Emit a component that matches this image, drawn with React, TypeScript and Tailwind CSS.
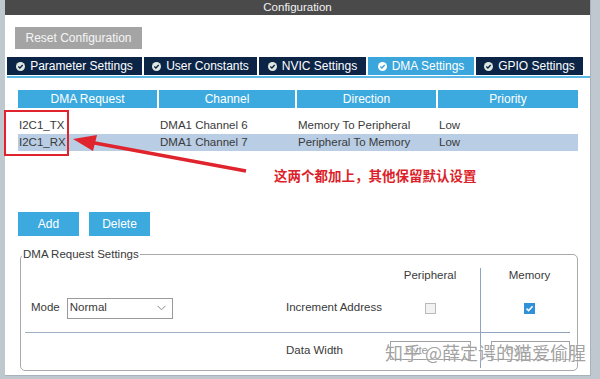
import React from "react";

const Check = ({ active }: { active?: boolean }) => (
  <svg width="9" height="9" viewBox="0 0 9 9" className="shrink-0">
    <circle cx="4.5" cy="4.5" r="4.5" fill={active ? "#ffffff" : "#dfe7e1"} />
    <path d="M2.3 4.6 L3.9 6.1 L6.7 3.1" fill="none" stroke={active ? "#3aa6db" : "#0c2547"} strokeWidth="1.4" />
  </svg>
);

const tabs = [
  { label: "Parameter Settings", w: "w-[135px]" },
  { label: "User Constants", w: "w-[113px]" },
  { label: "NVIC Settings", w: "w-[107px]" },
  { label: "DMA Settings", w: "w-[106px]", active: true },
  { label: "GPIO Settings", w: "w-[107px]" },
];

const rows = [
  ["I2C1_TX", "DMA1 Channel 6", "Memory To Peripheral", "Low"],
  ["I2C1_RX", "DMA1 Channel 7", "Peripheral To Memory", "Low"],
];

export default function App() {
  return (
    <div className="relative w-[600px] h-[379px] bg-[#bfc7cf] flex flex-col pl-[5px] pr-[9px] pb-[3px] font-['Liberation_Sans',Arial,sans-serif] text-[11.5px] text-[#3a3a3a] overflow-hidden">
      <div className="flex-1 min-h-0 bg-white flex flex-col border-r border-b border-[#a9b2bb] overflow-hidden">
        <div className="shrink-0 h-[15px] bg-[#4a4a4a] text-[#f2f2f2] leading-[15px] text-center">Configuration</div>

        <div className="shrink-0 mt-[12px] ml-[10px] w-[127px] h-[22px] bg-[#a4a4a4] text-[#f5f5f5] text-[12px] flex items-center justify-center">
          Reset Configuration
        </div>

        <div className="shrink-0 mt-[8px] ml-[2px] flex gap-[2px] h-[18px] text-[12px]">
          {tabs.map((t) => (
            <div
              key={t.label}
              className={`${t.w} h-full flex items-center justify-center gap-[5px] text-white ${t.active ? "bg-[#3aa6db]" : "bg-[#0c2547]"}`}
            >
              <Check active={t.active} />
              <span>{t.label}</span>
            </div>
          ))}
        </div>
        <div className="shrink-0 ml-[2px] mt-[1px] h-[2px] w-[583px] bg-[#5bb8e6]" />

        <div className="shrink-0 mt-[12px] ml-[13px] w-[560px]">
          <div className="grid grid-cols-[139px_136px_139px_140px] gap-x-[2px] h-[16px] text-[12px]">
            {["DMA Request", "Channel", "Direction", "Priority"].map((h) => (
              <div key={h} className="bg-[#3caade] text-white flex items-center justify-center">{h}</div>
            ))}
          </div>
          <div className="mt-[11px]">
            {rows.map((r, i) => (
              <div
                key={i}
                className={`grid grid-cols-[139px_136px_139px_140px] gap-x-[2px] h-[17px] items-center ${i === 1 ? "bg-[#b9cde4]" : ""}`}
              >
                {r.map((c, j) => (
                  <div key={j} className="pl-[1px] whitespace-nowrap">{c}</div>
                ))}
              </div>
            ))}
          </div>
        </div>

        <div className="shrink-0 mt-[61px] ml-[13px] flex gap-[10px] text-[12px]">
          <div className="w-[61px] h-[24px] bg-[#3caade] text-white flex items-center justify-center">Add</div>
          <div className="w-[61px] h-[24px] bg-[#3caade] text-white flex items-center justify-center">Delete</div>
        </div>

        <div className="shrink-0 mt-[18px] ml-[15px] w-[558px] h-[117px] border border-[#a9a9a9] rounded-[5px] pl-[4px] pr-[7px] flex flex-col">
          <div className="-mt-[8px] -ml-[3px] w-fit bg-white px-[1px] leading-[14px] h-[14px]">DMA Request Settings</div>
          <div className="mt-[7px] grid grid-cols-[255px_100px_100px_90px] grid-rows-[16px_49px_35px]">
            <div />
            <div />
            <div className="flex items-center justify-center">Peripheral</div>
            <div className="flex items-center justify-center pl-[8px] border-l border-[#8fa3bd]">Memory</div>

            <div className="flex items-center pl-[6px] border-b border-[#9fb0c4]">
              <span>Mode</span>
              <div className="ml-[7px] w-[106px] h-[21px] border border-[#9a9a9a] flex items-center justify-between pl-[2px] pr-[6px]">
                <span>Normal</span>
                <svg width="9" height="6" viewBox="0 0 9 6">
                  <path d="M0.5 0.8 L4.5 4.8 L8.5 0.8" fill="none" stroke="#8a8a8a" strokeWidth="1" />
                </svg>
              </div>
            </div>
            <div className="flex items-center pl-[6px] whitespace-nowrap border-b border-[#9fb0c4]">Increment Address</div>
            <div className="flex items-center justify-center border-b border-[#9fb0c4]">
              <div className="w-[11px] h-[11px] border border-[#b9b9b9] bg-[#f2f2f2]" />
            </div>
            <div className="flex items-center justify-center pl-[8px] border-l border-b border-[#8fa3bd]">
              <div className="w-[11px] h-[11px] bg-[#2f91d8] flex items-center justify-center">
                <svg width="9" height="9" viewBox="0 0 9 9">
                  <path d="M1.5 4.6 L3.6 6.6 L7.6 2.2" fill="none" stroke="#ffffff" strokeWidth="1.5" />
                </svg>
              </div>
            </div>

            <div />
            <div className="flex items-center pl-[6px]">Data Width</div>
            <div className="flex items-center pl-[10px]">
              <div className="w-[81px] h-[19px] border border-[#a0a0a0] flex items-center pl-[14px] text-[#9a9a9a]">Byte</div>
            </div>
            <div className="flex items-center pl-[10px] border-l border-[#8fa3bd]">
              <div className="w-[79px] h-[19px] border border-[#a0a0a0] flex items-center pl-[14px] text-[#9a9a9a]">Byte</div>
            </div>
          </div>
        </div>
      </div>

      {/* annotation overlays */}
      <div className="absolute left-[4px] top-[110px] w-[65px] h-[46px] border-[2.5px] border-[#e0242e]" />
      <svg className="absolute left-0 top-0 pointer-events-none" width="600" height="379">
        <line x1="246" y1="171" x2="92" y2="142.5" stroke="#e0242e" strokeWidth="3.5" />
        <polygon points="73,139 97,135 93,151" fill="#e0242e" />
      </svg>
      <div className="absolute left-[274px] top-[167px] text-[13.5px] font-bold text-[#dc1f2b] font-['Noto_Sans_CJK_SC',sans-serif] leading-[16px] whitespace-nowrap">
        这两个都加上，其他保留默认设置
      </div>
      <div className="absolute left-[385px] top-[340px] text-[18px] leading-[24px] text-[#8a8a8a]/80 font-['Noto_Sans_CJK_SC',sans-serif] whitespace-nowrap [text-shadow:0_0_2px_#ffffff]">
        知乎 @薛定谔的猫爱偷腥
      </div>
    </div>
  );
}
